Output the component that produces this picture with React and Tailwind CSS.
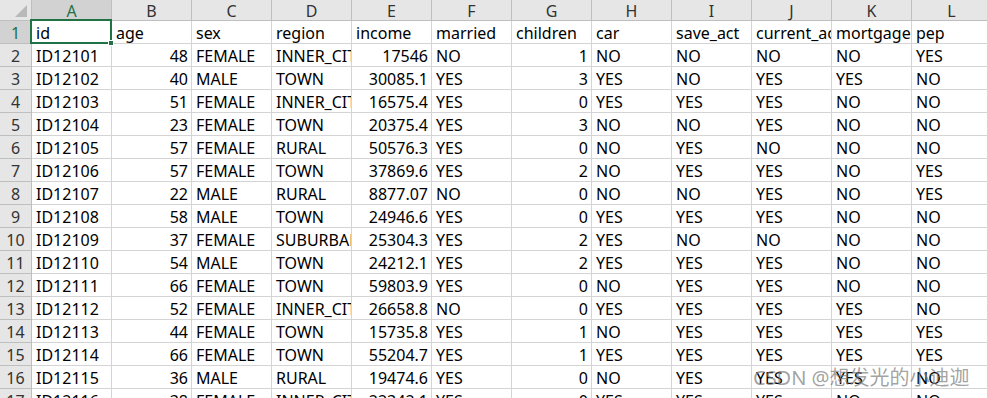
import React from "react";

const letters = ["A", "B", "C", "D", "E", "F", "G", "H", "I", "J", "K", "L"];

// numeric columns are right-aligned (age, income, children)
const numericCols = [1, 4, 6];

const data = [
  ["id", "age", "sex", "region", "income", "married", "children", "car", "save_act", "current_acct", "mortgage", "pep"],
  ["ID12101", "48", "FEMALE", "INNER_CITY", "17546", "NO", "1", "NO", "NO", "NO", "NO", "YES"],
  ["ID12102", "40", "MALE", "TOWN", "30085.1", "YES", "3", "YES", "NO", "YES", "YES", "NO"],
  ["ID12103", "51", "FEMALE", "INNER_CITY", "16575.4", "YES", "0", "YES", "YES", "YES", "NO", "NO"],
  ["ID12104", "23", "FEMALE", "TOWN", "20375.4", "YES", "3", "NO", "NO", "YES", "NO", "NO"],
  ["ID12105", "57", "FEMALE", "RURAL", "50576.3", "YES", "0", "NO", "YES", "NO", "NO", "NO"],
  ["ID12106", "57", "FEMALE", "TOWN", "37869.6", "YES", "2", "NO", "YES", "YES", "NO", "YES"],
  ["ID12107", "22", "MALE", "RURAL", "8877.07", "NO", "0", "NO", "NO", "YES", "NO", "YES"],
  ["ID12108", "58", "MALE", "TOWN", "24946.6", "YES", "0", "YES", "YES", "YES", "NO", "NO"],
  ["ID12109", "37", "FEMALE", "SUBURBAN", "25304.3", "YES", "2", "YES", "NO", "NO", "NO", "NO"],
  ["ID12110", "54", "MALE", "TOWN", "24212.1", "YES", "2", "YES", "YES", "YES", "NO", "NO"],
  ["ID12111", "66", "FEMALE", "TOWN", "59803.9", "YES", "0", "NO", "YES", "YES", "NO", "NO"],
  ["ID12112", "52", "FEMALE", "INNER_CITY", "26658.8", "NO", "0", "YES", "YES", "YES", "YES", "NO"],
  ["ID12113", "44", "FEMALE", "TOWN", "15735.8", "YES", "1", "NO", "YES", "YES", "YES", "YES"],
  ["ID12114", "66", "FEMALE", "TOWN", "55204.7", "YES", "1", "YES", "YES", "YES", "YES", "YES"],
  ["ID12115", "36", "MALE", "RURAL", "19474.6", "YES", "0", "NO", "YES", "YES", "YES", "NO"],
  ["ID12116", "38", "FEMALE", "INNER_CITY", "22342.1", "YES", "0", "YES", "YES", "YES", "NO", "NO"],
];

const font = { fontFamily: '"Noto Sans", "Liberation Sans", "Noto Sans CJK SC", sans-serif' };

const Corner = () => (
  <div className="h-[21px] bg-[#e6e6e6] border-r border-b border-[#bfbfbf] relative">
    <svg width="31" height="20" className="absolute left-0 top-0">
      <polygon points="27,5 27,17 15,17" fill="#b9b9b9" />
    </svg>
  </div>
);

const ColHead = ({ label, active }) => (
  <div
    className={`h-[21px] border-r border-b border-[#bfbfbf] text-center text-[16px] leading-[20px] pt-[1px] ${
      active ? "bg-[#d2d2d2] text-[#217346]" : "bg-[#e6e6e6] text-[#333]"
    }`}
  >
    {label}
  </div>
);

const RowHead = ({ n, active }) => (
  <div
    className={`h-[23px] border-r border-b border-[#bfbfbf] text-center text-[16px] leading-[21px] pt-[2px] overflow-hidden ${
      active ? "bg-[#d2d2d2] text-[#217346]" : "bg-[#e6e6e6] text-[#333]"
    }`}
  >
    {n}
  </div>
);

const Cell = ({ value, right }) => (
  <div
    className={`h-[23px] border-r border-b border-[#d4d4d4] bg-white overflow-hidden whitespace-nowrap text-[16px] leading-[21px] pt-[2px] text-black ${
      right ? "text-right pr-[3px]" : "pl-[4px]"
    }`}
  >
    {value}
  </div>
);

export default function App() {
  return (
    <div className="w-[987px] h-[398px] overflow-hidden bg-white relative" style={font}>
      <div className="grid grid-cols-[32px_repeat(12,80px)] w-[992px]">
        <Corner />
        {letters.map((l, i) => (
          <ColHead key={l} label={l} active={i === 0} />
        ))}
        {data.map((row, r) => (
          <React.Fragment key={r}>
            <RowHead n={r + 1} active={r === 0} />
            {row.map((v, c) => (
              <Cell key={c} value={v} right={r > 0 && numericCols.includes(c)} />
            ))}
          </React.Fragment>
        ))}
      </div>

      {/* active cell A1 */}
      <div className="absolute left-[30px] top-[19px] w-[82px] h-[25px] border-2 border-[#217346] pointer-events-none" />
      <div className="absolute left-[108px] top-[40px] w-[6px] h-[6px] bg-[#217346] border border-white" />

      {/* watermark */}
      <div
        className="absolute left-[753px] top-[366px] text-[20px] leading-[24px] text-[#7a7a7a]/70 whitespace-nowrap"
        style={{ fontFamily: '"Noto Sans", "Noto Sans CJK SC", sans-serif' }}
      >
        CSDN @想发光的小迪迦
      </div>
    </div>
  );
}
